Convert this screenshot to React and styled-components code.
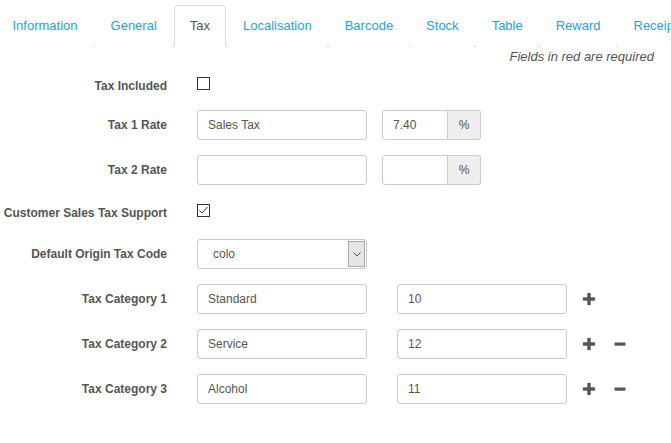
import React from "react";
import styled, { createGlobalStyle } from "styled-components";

const Global = createGlobalStyle`
  html, body { margin: 0; padding: 0; background: #fff; overflow: hidden; }
  body {
    font-family: "Liberation Sans", Arial, sans-serif;
    font-size: 12px;
    color: #555;
  }
`;

const Page = styled.div`
  width: 671px;
  height: 443px;
  overflow: hidden;
`;

const TabBar = styled.ul`
  display: flex;
  list-style: none;
  margin: 0;
  padding: 5px 0 0 0;
  border-bottom: 1px solid #ddd;
  white-space: nowrap;
`;

const TabList = styled.div`
  display: flex;
  margin-left: -3px;
`;

const Tab = styled.li`
  flex: none;
  margin: 0 2px -1px 0;
  padding: 10px 14.5px;
  font-size: 13px;
  line-height: 20px;
  border: 1px solid ${(p) => (p.$active ? "#ddd" : "transparent")};
  border-bottom-color: ${(p) => (p.$active ? "#fff" : "transparent")};
  border-radius: 4px 4px 0 0;
  background: #fff;
  color: ${(p) => (p.$active ? "#555" : "#2c9de3")};
  cursor: pointer;
`;

const Hint = styled.div`
  margin-top: 3px;
  padding-right: 17px;
  text-align: right;
  font-style: italic;
  font-size: 13px;
  line-height: 14px;
  color: #555;
`;

const Form = styled.div`
  display: flex;
  flex-direction: column;
  gap: 15px;
  margin-top: 11px;
`;

const Row = styled.div`
  display: grid;
  grid-template-columns: 167px auto;
  column-gap: 30px;
  align-items: center;
  height: ${(p) => p.$h || 30}px;
`;

const Label = styled.label`
  text-align: right;
  font-weight: bold;
  color: #555;
  white-space: nowrap;
  line-height: 14px;
  padding-top: ${(p) => (p.$check ? 2 : 0)}px;
`;

const Controls = styled.div`
  display: flex;
  align-items: center;
  gap: ${(p) => p.$gap || 15}px;
`;

const Box = styled.span`
  display: inline-flex;
  width: 13px;
  height: 13px;
  box-sizing: border-box;
  border: 1px solid #333;
  background: #fff;
  margin-bottom: 3px;
`;

const TextInput = styled.div`
  box-sizing: border-box;
  width: ${(p) => p.$w || 170}px;
  height: 30px;
  padding: 0 10px;
  border: 1px solid #ccc;
  border-radius: ${(p) => (p.$group ? "3px 0 0 3px" : "3px")};
  display: flex;
  align-items: center;
  color: #555;
  background: #fff;
`;

const Group = styled.div`
  display: flex;
`;

const Addon = styled.div`
  box-sizing: border-box;
  width: 33px;
  height: 30px;
  border: 1px solid #ccc;
  border-left: none;
  border-radius: 0 3px 3px 0;
  background: #eee;
  display: flex;
  align-items: center;
  justify-content: center;
  color: #555;
`;

const Select = styled.div`
  box-sizing: border-box;
  width: 170px;
  height: 30px;
  border: 1px solid #ccc;
  border-radius: 3px;
  display: flex;
  align-items: stretch;
  background: #fff;
`;

const SelectText = styled.div`
  flex: 1;
  display: flex;
  align-items: center;
  padding-left: 15px;
  color: #555;
`;

const SelectButton = styled.div`
  width: 17px;
  margin: 1px;
  background: #e6e6e6;
  border: 1px solid #aaa;
  box-sizing: border-box;
  display: flex;
  align-items: center;
  justify-content: center;
`;

const IconBtn = styled.span`
  display: inline-flex;
  width: 12px;
  height: 12px;
  cursor: pointer;
`;

const Icons = styled.div`
  display: flex;
  align-items: center;
  gap: 19px;
  margin-left: 1px;
`;

const Check = ({ checked }) => (
  <Box>
    {checked && (
      <svg width="11" height="11" viewBox="0 0 11 11">
        <polyline points="1.5,5.5 4,8 9.5,2" fill="none" stroke="#333" strokeWidth="1" />
      </svg>
    )}
  </Box>
);

const Plus = () => (
  <IconBtn>
    <svg width="12" height="12" viewBox="0 0 12 12">
      <rect x="0" y="4.3" width="12" height="3.4" fill="#555" />
      <rect x="4.3" y="0" width="3.4" height="12" fill="#555" />
    </svg>
  </IconBtn>
);

const Minus = () => (
  <IconBtn>
    <svg width="12" height="12" viewBox="0 0 12 12">
      <rect x="0.5" y="4.5" width="11" height="3.2" fill="#555" />
    </svg>
  </IconBtn>
);

const tabs = ["Information", "General", "Tax", "Localisation", "Barcode", "Stock", "Table", "Reward", "Receipt"];

const categories = [
  { name: "Standard", value: "10", minus: false },
  { name: "Service", value: "12", minus: true },
  { name: "Alcohol", value: "11", minus: true },
];

export default function App() {
  return (
    <Page>
      <Global />
      <TabBar>
        <TabList>
          {tabs.map((t) => (
            <Tab key={t} $active={t === "Tax"}>
              {t}
            </Tab>
          ))}
        </TabList>
      </TabBar>
      <Hint>Fields in red are required</Hint>
      <Form>
        <Row $h={20}>
          <Label $check>Tax Included</Label>
          <Controls>
            <Check />
          </Controls>
        </Row>
        <Row>
          <Label>Tax 1 Rate</Label>
          <Controls>
            <TextInput>Sales Tax</TextInput>
            <Group>
              <TextInput $w={66} $group>7.40</TextInput>
              <Addon>%</Addon>
            </Group>
          </Controls>
        </Row>
        <Row>
          <Label>Tax 2 Rate</Label>
          <Controls>
            <TextInput />
            <Group>
              <TextInput $w={66} $group />
              <Addon>%</Addon>
            </Group>
          </Controls>
        </Row>
        <Row $h={24}>
          <Label $check>Customer Sales Tax Support</Label>
          <Controls>
            <Check checked />
          </Controls>
        </Row>
        <Row>
          <Label>Default Origin Tax Code</Label>
          <Controls>
            <Select>
              <SelectText>colo</SelectText>
              <SelectButton>
                <svg width="8" height="5" viewBox="0 0 8 5">
                  <polyline points="0.5,0.5 4,4 7.5,0.5" fill="none" stroke="#555" strokeWidth="1" />
                </svg>
              </SelectButton>
            </Select>
          </Controls>
        </Row>
        {categories.map((c, i) => (
          <Row key={c.name}>
            <Label>Tax Category {i + 1}</Label>
            <Controls $gap={30}>
              <TextInput>{c.name}</TextInput>
              <Controls $gap={15}>
                <TextInput>{c.value}</TextInput>
                <Icons>
                  <Plus />
                  {c.minus && <Minus />}
                </Icons>
              </Controls>
            </Controls>
          </Row>
        ))}
      </Form>
    </Page>
  );
}
